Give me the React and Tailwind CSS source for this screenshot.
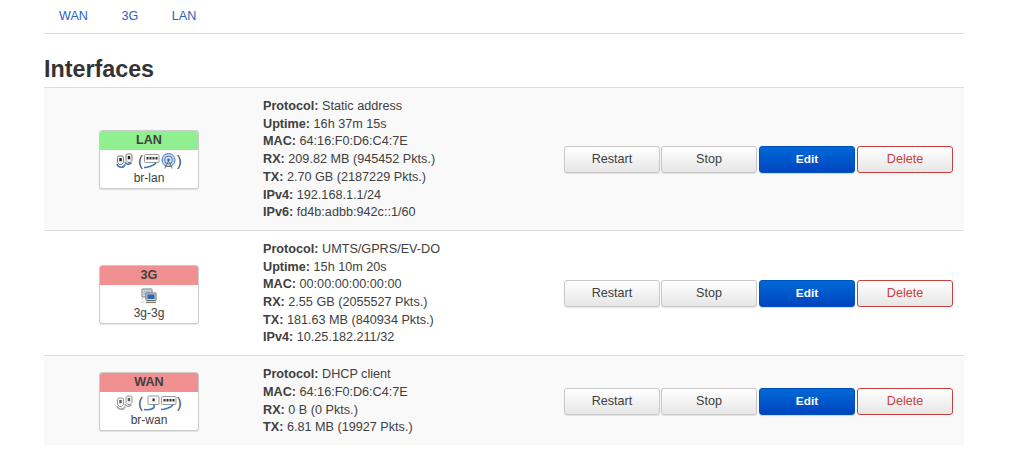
const Switch = ({ off }) => (
  <svg width="17" height="16" viewBox="0 0 17 16" className="shrink-0">
    <rect x="1.500" y="1.500" width="14.500" height="8" rx="1" fill="#fbfbfb" stroke="#8f8f8f" strokeWidth="0.900" />
    <path d="M3.500 4h2v2.500h-2zM6.500 4h2v2.500h-2zM9.500 4h2v2.500h-2zM12.500 4h2v2.500h-2z" fill="#2e2e2e" />
    <path d="M1 14.500c3.500 0 4.500-.5 7-1.500s4-1 5-3.500" fill="none" stroke="#3f78c4" strokeWidth="1.600" />
  </svg>
);
const Single = () => (
  <svg width="17" height="16" viewBox="0 0 17 16" className="shrink-0">
    <rect x="5" y="1" width="11" height="8.500" rx="1" fill="#fbfbfb" stroke="#8f8f8f" strokeWidth="0.900" />
    <path d="M9.500 3.500h2.200v2.700h-2.200z" fill="#2e2e2e" />
    <path d="M1 14.500c3 .5 7.500 0 9.500-1.500s0-3 0-3.500" fill="none" stroke="#3f78c4" strokeWidth="1.600" />
  </svg>
);
const Bridge = ({ off }) => {
  const c = off ? "#a2a6ab" : "#3f78c4";
  const b = off ? "#8b8b8b" : "#6a6a6a";
  const d = off ? "#5c5c5c" : "#1f1f1f";
  return (
    <svg width="18" height="16" viewBox="0 0 18 16" className="shrink-0">
      <path d="M1 11c1.500 4.500 7 4 8 .5M9 9c1 3 4.500 3 6.500 .5" fill="none" stroke={c} strokeWidth="1.700" />
      <path d="M1.500 4.500q0-1.500 1.500-1.500h3q1.500 0 1.500 1.500v5l-2 2h-2l-2-2z" fill="#f4f4f4" stroke={b} strokeWidth="0.900" />
      <path d="M10 2.500q0-1.500 1.500-1.500h3q1.500 0 1.500 1.500v5l-2 2h-2l-2-2z" fill="#f4f4f4" stroke={b} strokeWidth="0.900" />
      <path d="M3.300 5h2.400v3.200h-2.400zM11.800 3h2.400v3.200h-2.400z" fill={d} />
    </svg>
  );
};
const Wifi = () => (
  <svg width="17" height="16" viewBox="0 0 17 16" className="shrink-0">
    <circle cx="8.500" cy="7" r="6.500" fill="#c3d8f0" stroke="#3f78c4" strokeWidth="1" />
    <circle cx="8.500" cy="7" r="3.800" fill="#e4eef8" stroke="#3a70b8" strokeWidth="1" />
    <circle cx="8.500" cy="7" r="1.400" fill="#2f5f9f" />
    <path d="M8.500 8l-3.800 7.500M8.500 8l3.800 7.500M5.500 13.500h6" fill="none" stroke="#6f6f6f" strokeWidth="1" />
  </svg>
);
const Modem = () => (
  <svg width="16" height="16" viewBox="0 0 16 16" className="shrink-0">
    <rect x="1" y="1" width="10" height="8" rx="0.500" fill="#eceff3" stroke="#6b6b6b" strokeWidth="0.900" />
    <rect x="2.300" y="2.300" width="7.400" height="5" fill="#aec4de" />
    <rect x="5" y="5" width="10" height="7.500" rx="0.500" fill="#f3f5f8" stroke="#555" strokeWidth="0.900" />
    <rect x="6.300" y="6.300" width="7.400" height="4.900" fill="#2d6aa8" />
    <path d="M5 14.300h10" stroke="#777" strokeWidth="1.300" />
    <path d="M1 10.500v1M1 13.500v1M3 13.500v1" stroke="#888" strokeWidth="0.900" />
  </svg>
);

const Paren = ({ children }) => <span className="text-[14px] leading-none text-[#404040]">{children}</span>;

const Badge = ({ name, up, sub, children }) => (
  <div className="w-[100px] rounded-[3px] border border-[#ccc] bg-white shadow-[0_1px_1px_rgba(0,0,0,0.1)] overflow-hidden text-center">
    <div className={`h-[19px] leading-[19px] text-[12.600px] font-bold text-[#404040] ${up ? "bg-[#90f090]" : "bg-[#f09090]"}`}>{name}</div>
    <div className="flex h-[19px] items-center justify-center pt-[3px]">{children}</div>
    <div className="h-[19px] leading-[18px] text-[12px] text-[#404040]">{sub}</div>
  </div>
);

const Btn = ({ children, kind }) => {
  const base = "h-[27px] w-[96px] rounded-[3px] border leading-[25px] text-center";
  const style =
    kind === "primary"
      ? "mx-[2px] text-[11.800px] border-[#0050c0] bg-gradient-to-b from-[#0069d6] to-[#0044c0] text-white font-bold shadow-[0_1px_1px_rgba(0,0,0,0.15)]"
      : kind === "danger"
      ? "text-[12.600px] border-[#c84040] bg-gradient-to-b from-white to-[#e6e6e6] text-[#c84040]"
      : "text-[12.600px] border-[#c8c8c8] bg-gradient-to-b from-white to-[#e6e6e6] text-[#404040] shadow-[0_1px_1px_rgba(0,0,0,0.1)]";
  return <div className={`${base} ${style}`}>{children}</div>;
};

const Row = ({ badge, lines, alt }) => (
  <div className={`flex items-center border-t border-[#ddd] pt-[10px] pb-[8px] ${alt ? "bg-[#f9f9f9]" : "bg-white"}`}>
    <div className="flex w-[210px] shrink-0 justify-center">{badge}</div>
    <div className="ml-[9px] flex-1 text-[12.650px] leading-[17.700px] text-[#404040]">
      {lines.map(([k, v]) => (
        <div key={k} className="whitespace-nowrap">
          <span className="font-bold">{k}:</span> {v}
        </div>
      ))}
    </div>
    <div className="mr-[11px] mb-[1px] flex items-center">
      <Btn>Restart</Btn>
      <div className="w-px" />
      <Btn>Stop</Btn>
      <Btn kind="primary">Edit</Btn>
      <Btn kind="danger">Delete</Btn>
    </div>
  </div>
);

export default function App() {
  return (
    <div className="min-h-[459px] bg-white font-['Liberation_Sans',Arial,sans-serif]">
      <div className="mx-[44px] w-[920px]">
        <div className="flex h-[34px] items-start gap-[33.500px] border-b border-[#ddd] pl-[15px] pt-[8px] text-[12.600px] leading-[17px] text-[#2b5fc4]">
          <span>WAN</span>
          <span>3G</span>
          <span>LAN</span>
        </div>
        <h2 className="pt-[21px] pb-[3px] text-[23.300px] font-bold leading-[29px] text-[#333]">Interfaces</h2>
        <Row
          alt
          badge={
            <Badge name="LAN" up sub="br-lan">
              <Bridge />
              <Paren>&nbsp;(</Paren>
              <Switch />
              <Wifi />
              <Paren>)</Paren>
            </Badge>
          }
          lines={[
            ["Protocol", "Static address"],
            ["Uptime", "16h 37m 15s"],
            ["MAC", "64:16:F0:D6:C4:7E"],
            ["RX", "209.82 MB (945452 Pkts.)"],
            ["TX", "2.70 GB (2187229 Pkts.)"],
            ["IPv4", "192.168.1.1/24"],
            ["IPv6", "fd4b:adbb:942c::1/60"],
          ]}
        />
        <Row
          badge={
            <Badge name="3G" sub="3g-3g">
              <Modem />
            </Badge>
          }
          lines={[
            ["Protocol", "UMTS/GPRS/EV-DO"],
            ["Uptime", "15h 10m 20s"],
            ["MAC", "00:00:00:00:00:00"],
            ["RX", "2.55 GB (2055527 Pkts.)"],
            ["TX", "181.63 MB (840934 Pkts.)"],
            ["IPv4", "10.25.182.211/32"],
          ]}
        />
        <Row
          alt
          badge={
            <Badge name="WAN" sub="br-wan">
              <Bridge off />
              <Paren>&nbsp;(</Paren>
              <Single />
              <Switch />
              <Paren>)</Paren>
            </Badge>
          }
          lines={[
            ["Protocol", "DHCP client"],
            ["MAC", "64:16:F0:D6:C4:7E"],
            ["RX", "0 B (0 Pkts.)"],
            ["TX", "6.81 MB (19927 Pkts.)"],
          ]}
        />
      </div>
    </div>
  );
}
